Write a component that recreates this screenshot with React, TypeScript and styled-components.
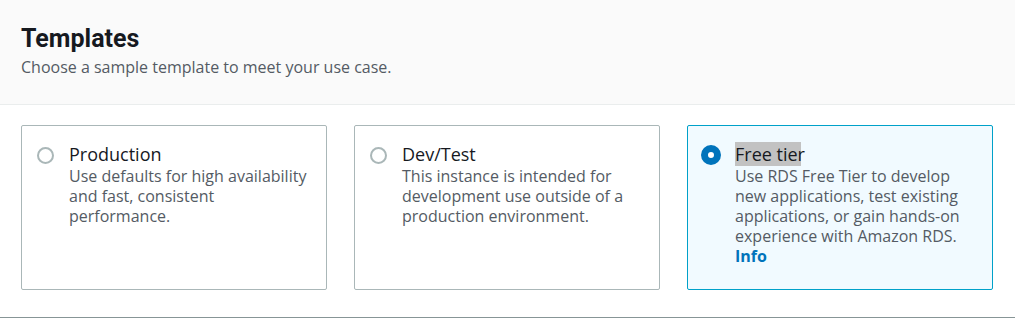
import React from "react";
import styled, { createGlobalStyle } from "styled-components";

const Global = createGlobalStyle`
  html, body { margin: 0; padding: 0; background: #ffffff; }
  body { font-family: "Open Sans", "Noto Sans", Arial, sans-serif; color: #16191f; }
  * { box-sizing: border-box; }
`;

const Header = styled.header`
  background: #fafafa;
  padding: 24px 22px 27px 21px;
  border-bottom: 1px solid #eaeded;
`;

const Heading = styled.h2`
  margin: 0;
  font-family: Roboto, "Open Sans", Arial, sans-serif;
  font-weight: 700;
  font-size: 25px;
  line-height: 30px;
  color: #16191f;
`;

const Subtitle = styled.p`
  margin: 3px 0 0;
  font-size: 16px;
  line-height: 20px;
  color: #545b64;
`;

const Body = styled.section`
  padding: 20px 22px 27px 21px;
  border-bottom: 1px solid #879596;
  display: grid;
  grid-template-columns: repeat(3, 1fr);
  gap: 27px;
`;

const Card = styled.label<{ $selected?: boolean }>`
  display: grid;
  grid-template-columns: 20px 1fr;
  column-gap: 14px;
  align-content: start;
  padding: 17px 15px 23px 13px;
  border: 1px solid ${(p) => (p.$selected ? "#00a1c9" : "#aab7b8")};
  border-radius: 2px;
  background: ${(p) => (p.$selected ? "#f1faff" : "#ffffff")};
  cursor: pointer;
`;

const RadioSlot = styled.span`
  height: 24px;
  display: flex;
  align-items: center;
  justify-content: center;
`;

const Radio = styled.span<{ $checked?: boolean }>`
  display: block;
  flex-shrink: 0;
  width: ${(p) => (p.$checked ? 20 : 17)}px;
  height: ${(p) => (p.$checked ? 20 : 17)}px;
  border-radius: 50%;
  background: #ffffff;
  border: ${(p) => (p.$checked ? "7px solid #0073bb" : "2px solid #aab7b8")};
`;

const Content = styled.span`
  display: flex;
  flex-direction: column;
`;

const Title = styled.span`
  font-size: 18px;
  line-height: 22px;
  margin-bottom: 1px;
  color: #16191f;
`;

const Selected = styled.span`
  background: #c2c2c2;
`;

const PartSelected = styled.span`
  background: linear-gradient(to right, #c2c2c2 45%, transparent 45%);
`;

const Description = styled.span`
  font-size: 16px;
  line-height: 20px;
  color: #545b64;
`;

const InfoLink = styled.a`
  display: block;
  font-weight: 700;
  color: #0073bb;
  text-decoration: none;
`;

type Option = {
  id: string;
  title: React.ReactNode;
  description: string;
  info?: boolean;
};

const options: Option[] = [
  {
    id: "production",
    title: "Production",
    description: "Use defaults for high availability and fast, consistent performance.",
  },
  {
    id: "devtest",
    title: "Dev/Test",
    description: "This instance is intended for development use outside of a production environment.",
  },
  {
    id: "free",
    title: (
      <>
        <Selected>Free tie</Selected>
        <PartSelected>r</PartSelected>
      </>
    ),
    description: "Use RDS Free Tier to develop new applications, test existing applications, or gain hands-on experience with Amazon RDS.",
    info: true,
  },
];

export default function App() {
  const selected = "free";
  return (
    <>
      <Global />
      <Header>
        <Heading>Templates</Heading>
        <Subtitle>Choose a sample template to meet your use case.</Subtitle>
      </Header>
      <Body>
        {options.map((o) => (
          <Card key={o.id} $selected={o.id === selected}>
            <RadioSlot>
              <Radio $checked={o.id === selected} />
            </RadioSlot>
            <Content>
              <Title>{o.title}</Title>
              <Description>
                {o.description}
                {o.info && <InfoLink href="#">Info</InfoLink>}
              </Description>
            </Content>
          </Card>
        ))}
      </Body>
    </>
  );
}
